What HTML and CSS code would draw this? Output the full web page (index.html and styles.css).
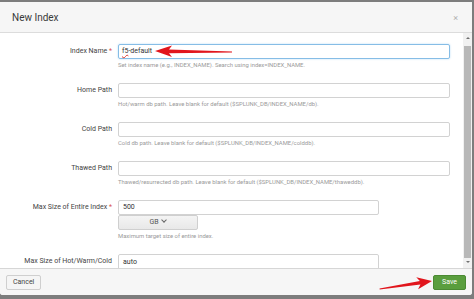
FILE: index.html
```html
<html>
	<head>
		<title>New Index</title>
		<meta name="viewport" content="width=device-width, initial-scale=1.0">
		<link rel="stylesheet" href="styles.css">
	</head>
	<body>
		<div class="modal">
			<div class="modal-header">
				<div class="modal-title">New Index</div>
				<div class="modal-close">&times;</div>
			</div>
			<div class="modal-body">
				<div class="form">
					<div class="row">
						<div class="label">Index Name <span class="req">*</span></div>
						<div class="ctrl">
							<div class="field focus"><span class="typo">f5</span>-default</div>
							<div class="help">Set index name (e.g., INDEX_NAME). Search using index=INDEX_NAME.</div>
						</div>
					</div>
					<div class="row">
						<div class="label">Home Path</div>
						<div class="ctrl">
							<div class="field"></div>
							<div class="help">Hot/warm db path. Leave blank for default ($SPLUNK_DB/INDEX_NAME/db).</div>
						</div>
					</div>
					<div class="row">
						<div class="label">Cold Path</div>
						<div class="ctrl">
							<div class="field"></div>
							<div class="help">Cold db path. Leave blank for default ($SPLUNK_DB/INDEX_NAME/colddb).</div>
						</div>
					</div>
					<div class="row">
						<div class="label">Thawed Path</div>
						<div class="ctrl">
							<div class="field"></div>
							<div class="help">Thawed/resurrected db path. Leave blank for default ($SPLUNK_DB/INDEX_NAME/thaweddb).</div>
						</div>
					</div>
					<div class="row">
						<div class="label">Max Size of Entire Index <span class="req">*</span></div>
						<div class="ctrl">
							<div class="field short">500</div>
							<div class="unit">GB <span class="chev"></span></div>
							<div class="help">Maximum target size of entire index.</div>
						</div>
					</div>
					<div class="row">
						<div class="label">Max Size of Hot/Warm/Cold</div>
						<div class="ctrl">
							<div class="field short tall">auto</div>
						</div>
					</div>
				</div>
				<div class="scrollbar">
					<div class="sb-up"></div>
					<div class="sb-thumb"></div>
					<div class="sb-down"></div>
				</div>
			</div>
			<div class="modal-footer">
				<div class="btn">Cancel</div>
				<div class="btn btn-save">Save</div>
			</div>
		</div>
		<svg class="arrows" width="474" height="299" viewBox="0 0 474 299">
			<path d="M155,51 L172,45.5 L169,49.6 L232,51.4 L232,52.4 L169,53.2 L172,57 Z" fill="#e1151c"/>
			<path d="M0,0 L-15,-6 L-12,-1.8 L-53,-0.6 L-53,0.6 L-12,1.8 L-15,6 Z" fill="#e1151c" transform="translate(432,281) rotate(-8.7)"/>
		</svg>
	</body>
</html>
```

FILE: styles.css
```css
body {
	margin: 0;
	width: 474px;
	height: 299px;
	overflow: hidden;
	background-color: #7d7d7d;
	font-family: Roboto, "Liberation Sans", sans-serif;
	color: #333;
}
.modal {
	margin-top: 2px;
	width: 472px;
	height: 293px;
	background: #fff;
	border-radius: 0 0 3px 3px;
	display: flex;
	flex-direction: column;
	overflow: hidden;
}
.modal-header {
	height: 30px;
	flex: none;
	background: #f6f6f6;
	border-bottom: 1px solid #dcdcdc;
	display: flex;
	align-items: center;
	justify-content: space-between;
	padding: 0 14px 0 12px;
}
.modal-title {
	font-size: 10px;
	color: #3a3a3a;
}
.modal-close {
	font-size: 9px;
	color: #b0b0b0;
	margin-top: 1px;
}
.modal-body {
	height: 235px;
	flex: none;
	display: flex;
	overflow: hidden;
}
.form {
	flex: 1;
	padding-top: 11px;
}
.row {
	display: flex;
	gap: 6px;
	margin-bottom: 14px;
}
.label {
	width: 112px;
	flex: none;
	text-align: right;
	font-size: 7px;
	line-height: 15px;
	color: #444;
	white-space: nowrap;
}
.req {
	color: #d9534f;
}
.ctrl {
	width: 332px;
}
.field {
	height: 15px;
	box-sizing: border-box;
	border: 1px solid #d2d2d2;
	border-radius: 2px;
	font-size: 7px;
	line-height: 13px;
	padding-left: 4px;
	color: #333;
}
.field.focus {
	border-color: #86bde6;
	box-shadow: 0 0 2px rgba(82, 168, 236, 0.45);
	padding-left: 3px;
}
.typo {
	text-decoration: underline wavy #e03a2e;
	text-decoration-thickness: 1px;
	text-underline-offset: 0.5px;
}
.field.short {
	width: 261px;
}
.field.tall {
	height: 20px;
	line-height: 14px;
}
.unit {
	width: 80px;
	height: 15px;
	box-sizing: border-box;
	border: 1px solid #cfcfcf;
	border-radius: 2px;
	background: linear-gradient(#f4f4f4, #e8e8e8);
	font-size: 7px;
	line-height: 13px;
	text-align: center;
	color: #555;
}
.chev {
	display: inline-block;
	width: 3px;
	height: 3px;
	border-right: 1px solid #666;
	border-bottom: 1px solid #666;
	transform: rotate(45deg);
	margin: 0 0 2px 2px;
}
.help {
	margin-top: 2px;
	font-size: 5.9px;
	line-height: 8px;
	color: #9a9a9a;
	white-space: nowrap;
}
.scrollbar {
	width: 9px;
	flex: none;
	background: #f1f1f1;
	display: flex;
	flex-direction: column;
	align-items: center;
}
.sb-up, .sb-down {
	width: 0;
	height: 0;
	flex: none;
	border-left: 2px solid transparent;
	border-right: 2px solid transparent;
}
.sb-up {
	margin: 4px 0 7px;
	border-bottom: 2px solid #707070;
}
.sb-down {
	margin: 3px 0 5px;
	border-top: 2px solid #707070;
}
.sb-thumb {
	flex: 1;
	width: 7px;
	background: #b8b8b8;
}
.modal-footer {
	flex: 1;
	background: #f6f6f6;
	border-top: 1px solid #d6d6d6;
	display: flex;
	align-items: center;
	justify-content: space-between;
	padding: 0 6px;
}
.btn {
	height: 15px;
	box-sizing: border-box;
	border: 1px solid #cfcfcf;
	border-radius: 2px;
	background: #f5f5f5;
	font-size: 7px;
	line-height: 13px;
	padding: 0 6px;
	color: #444;
}
.btn-save {
	background: #5a9e3e;
	border-color: #4b8a33;
	color: #fff;
	padding: 0 8px;
}
.arrows {
	position: absolute;
	top: 0;
	left: 0;
	pointer-events: none;
}
```
